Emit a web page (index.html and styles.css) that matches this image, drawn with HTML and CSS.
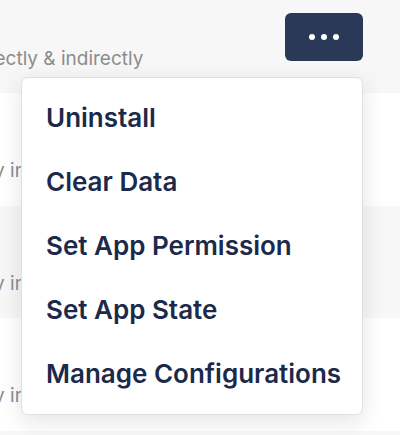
FILE: index.html
```html
<!DOCTYPE html>
<html lang="en">
<head>
<meta charset="utf-8">
<title>Apps</title>
<link rel="stylesheet" href="styles.css">
</head>
<body>
<div class="viewport">
  <div class="table">
    <div class="row">
      <div class="desc">Managed directly &amp; indirectly</div>
      <div class="actions">
        <button class="more" aria-label="More actions"><span class="dot"></span><span class="dot"></span><span class="dot"></span></button>
        <div class="menu">
          <div class="item">Uninstall</div>
          <div class="item">Clear Data</div>
          <div class="item">Set App Permission</div>
          <div class="item">Set App State</div>
          <div class="item">Manage Configurations</div>
        </div>
      </div>
    </div>
    <div class="row">
      <div class="desc">Inherited only indirectly</div>
      <div class="actions"><button class="more" aria-label="More actions"><span class="dot"></span><span class="dot"></span><span class="dot"></span></button></div>
    </div>
    <div class="row">
      <div class="desc">Inherited only indirectly</div>
      <div class="actions"><button class="more" aria-label="More actions"><span class="dot"></span><span class="dot"></span><span class="dot"></span></button></div>
    </div>
    <div class="row">
      <div class="desc">Inherited only indirectly</div>
      <div class="actions"><button class="more" aria-label="More actions"><span class="dot"></span><span class="dot"></span><span class="dot"></span></button></div>
    </div>
    <div class="row">
      <div class="desc">Inherited only indirectly</div>
      <div class="actions"><button class="more" aria-label="More actions"><span class="dot"></span><span class="dot"></span><span class="dot"></span></button></div>
    </div>
  </div>
</div>
</body>
</html>
```
FILE: styles.css
```css
html, body {
  margin: 0;
  padding: 0;
  background: #ffffff;
  overflow: hidden;
}
body {
  font-family: Inter, "Liberation Sans", sans-serif;
}
.viewport {
  width: 400px;
  height: 435px;
  overflow: hidden;
  position: relative;
}
.table {
  margin-top: -19.5px;
  margin-left: -118px;
}
.row {
  height: 112.5px;
  box-sizing: border-box;
  display: flex;
  align-items: center;
  justify-content: space-between;
  padding-right: 37px;
  background: #ffffff;
}
.row:nth-child(odd) {
  background: #f7f7f7;
}
.desc {
  align-self: flex-start;
  padding-top: 66px;
  font-size: 19px;
  line-height: 24px;
  color: #8c8c8c;
  white-space: nowrap;
}
.actions {
  position: relative;
}
.more {
  width: 78px;
  height: 48px;
  border: 0;
  border-radius: 6px;
  background: #2b3959;
  display: flex;
  align-items: center;
  justify-content: center;
  gap: 6px;
  padding: 0;
  cursor: pointer;
}
.dot {
  width: 6px;
  height: 6px;
  border-radius: 50%;
  background: #ffffff;
}
.menu {
  position: absolute;
  top: 64px;
  right: 0;
  width: 342px;
  box-sizing: border-box;
  padding: 8px 0;
  background: #ffffff;
  border: 1px solid #dfe0e6;
  border-radius: 7px;
  box-shadow: 0 6px 22px rgba(30, 40, 70, 0.13);
  z-index: 2;
}
.item {
  height: 64px;
  line-height: 64px;
  padding-left: 24px;
  font-size: 26px;
  font-weight: 600;
  color: #1b2a4a;
  white-space: nowrap;
}
```
